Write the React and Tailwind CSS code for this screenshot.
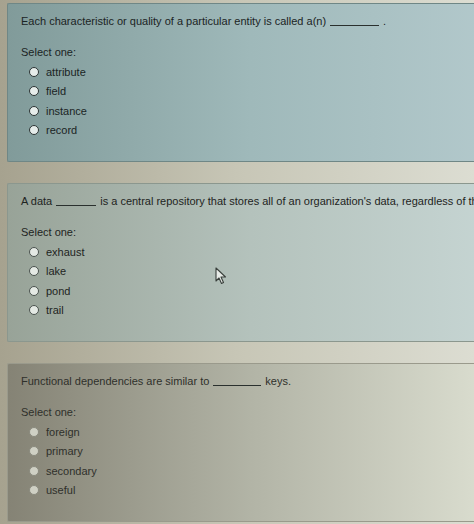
import React from 'react';

const questions = [
    {
        before: 'Each characteristic or quality of a particular entity is called a(n)',
        blank: 'w-[49px]',
        after: '.',
        options: ['attribute', 'field', 'instance', 'record'],
        card: 'bg-linear-to-r from-[#819b9a] via-[#9fb9ba] to-[#b3c9cc] border-[#6f8786]',
        text: 'text-[#1b2424]',
        radio: 'border-[#2c3434] bg-[#e6ecea]',
    },
    {
        before: 'A data',
        blank: 'w-[40px]',
        after: "is a central repository that stores all of an organization's data, regardless of th",
        options: ['exhaust', 'lake', 'pond', 'trail'],
        card: 'bg-linear-to-r from-[#98a398] via-[#b4c2bc] to-[#c6d5d3] border-[#8b978e]',
        text: 'text-[#1e2422]',
        radio: 'border-[#4a524e] bg-[#e4e9e4]',
        cursor: true,
    },
    {
        before: 'Functional dependencies are similar to',
        blank: 'w-[48px]',
        after: 'keys.',
        options: ['foreign', 'primary', 'secondary', 'useful'],
        card: 'bg-linear-to-r from-[#858375] via-[#b2b4a6] to-[#dcdfd1] border-[#9a9a8c]',
        text: 'text-[#2f302b]',
        radio: 'border-[#8a8a7e] bg-[#cfd0c4]',
    },
];

const Cursor = () => (
    <svg className="absolute left-[207px] top-[83px]" width="12" height="18" viewBox="0 0 12 18">
        <path d="M1 1 L1 14 L4 11 L6.5 16.5 L8.5 15.5 L6 10 L10.5 10 Z" fill="#e8ece8" stroke="#3a403c" strokeWidth="1.1" strokeLinejoin="round" />
    </svg>
);

const QuestionCard = ({ q }) => (
    <div className={`relative ml-[7px] mr-[-20px] h-[159px] border-l border-t border-b rounded-l-[2px] pl-[13px] pt-[10px] ${q.card} ${q.text}`}>
        <div className="flex items-end h-[14px] leading-[14px] whitespace-nowrap">
            <span className="shrink-0">{q.before}</span>
            <span className={`shrink-0 inline-block h-[1px] mb-[2px] mx-[4px] bg-[#2a302e] ${q.blank}`}></span>
            <span className="shrink-0">{q.after}</span>
        </div>
        <div className="mt-[17px] h-[14px] leading-[14px]">Select one:</div>
        <ul className="mt-[3px]">
            {q.options.map((opt) => (
                <li key={opt} className="flex items-center h-[19.5px] pl-[8px]">
                    <span className={`inline-block w-[10px] h-[10px] rounded-full border-[1.5px] ${q.radio}`}></span>
                    <span className="ml-[7px]">{opt}</span>
                </li>
            ))}
        </ul>
        {q.cursor && <Cursor />}
    </div>
);

export default function App() {
    return (
        <div
            className="w-[474px] h-[524px] overflow-hidden bg-linear-to-r from-[#a6a28f] via-[#c7c6b6] to-[#dcddd2] pt-[3px] text-[11px]"
            style={{ fontFamily: '"Liberation Sans", Arial, sans-serif' }}
        >
            <div className="flex flex-col gap-[21px]">
                {questions.map((q, i) => (
                    <QuestionCard key={i} q={q} />
                ))}
            </div>
        </div>
    );
}
